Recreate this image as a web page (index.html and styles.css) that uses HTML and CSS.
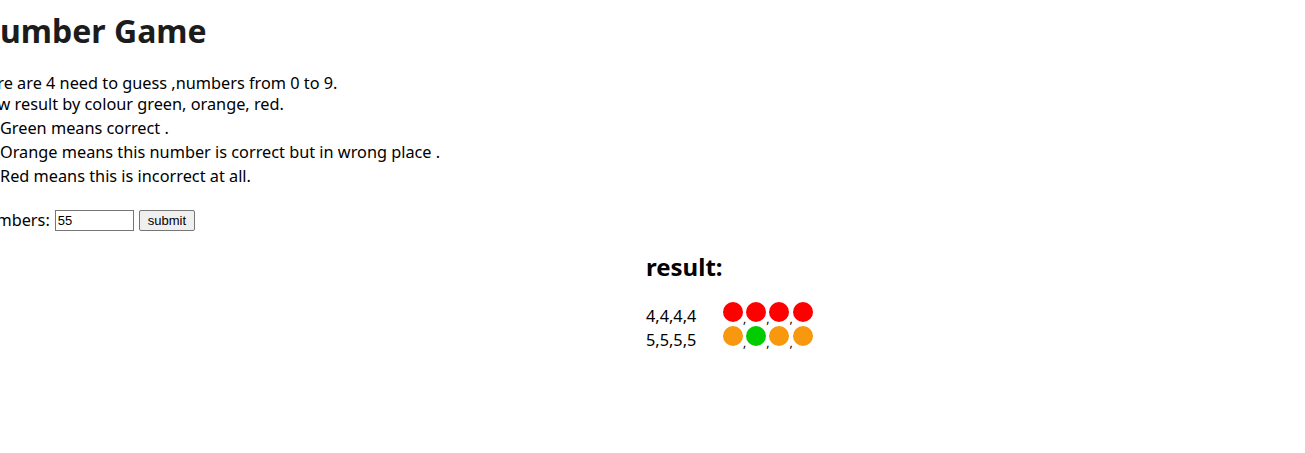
FILE: index.html
```html
<!DOCTYPE html>
<html>
<head>
<meta charset="utf-8">
<link rel="stylesheet" href="styles.css">
</head>
<body>
<div class="page">
  <div class="intro">
    <h1 class="title">Number Game</h1>
    <p class="desc">There are 4 need to guess ,numbers from 0 to 9.<br>Show result by colour green, orange, red.</p>
    <ul class="rules">
      <li>Green means correct .</li>
      <li>Orange means this number is correct but in wrong place .</li>
      <li>Red means this is incorrect at all.</li>
    </ul>
    <form class="guess">
      <label class="label">Numbers:</label>
      <input class="field" type="text" value="55">
      <button class="btn" type="button">submit</button>
    </form>
  </div>
  <div class="result">
    <h2 class="result-title">result:</h2>
    <div class="rows">
      <div class="row">
        <span class="guess-text">4,4,4,4</span>
        <span class="dots"><span class="dot red"></span>,<span class="dot red"></span>,<span class="dot red"></span>,<span class="dot red"></span></span>
      </div>
      <div class="row">
        <span class="guess-text">5,5,5,5</span>
        <span class="dots"><span class="dot orange"></span>,<span class="dot green"></span>,<span class="dot orange"></span>,<span class="dot orange"></span></span>
      </div>
    </div>
  </div>
</div>
</body>
</html>
```

FILE: styles.css
```css
html, body {
  margin: 0;
  padding: 0;
  background: #fff;
}
body {
  font-family: "Noto Sans", "Open Sans", sans-serif;
  font-size: 16.3px;
  color: #000;
  overflow: hidden;
}
.page {
  display: flex;
  flex-direction: column;
}
.intro {
  margin-left: -26px;
}
.title {
  font-size: 32px;
  font-weight: bold;
  color: #1c1c1c;
  margin: 7px 0 0 0;
  line-height: 48px;
}
.desc {
  margin: 18px 0 0 -5px;
  line-height: 21px;
}
.rules {
  list-style: none;
  margin: 1px 0 0 0;
  padding: 0 0 0 26px;
}
.rules li {
  line-height: 24px;
}
.guess {
  display: flex;
  align-items: center;
  margin: 21px 0 0 0;
  gap: 5px;
}
.field {
  width: 73px;
  height: 15px;
  font: 13px "Liberation Sans", Arial, sans-serif;
  border: 1px solid #767676;
  padding: 2px;
  margin: 0;
}
.btn {
  font: 13px "Liberation Sans", Arial, sans-serif;
  background: #efefef;
  border: 1px solid #767676;
  border-radius: 2px;
  padding: 1px 8px;
  height: 21px;
  margin-left: 0;
}
.result {
  margin-left: 646px;
  margin-top: 20px;
}
.result-title {
  font-size: 24px;
  font-weight: bold;
  margin: 0;
  line-height: 32px;
}
.rows {
  margin-top: 21px;
}
.row {
  display: flex;
  align-items: flex-end;
  height: 24px;
}
.guess-text {
  width: 77px;
  line-height: 24px;
}
.dots {
  display: flex;
  align-items: flex-end;
  line-height: 10px;
  font-size: 12px;
  margin-bottom: 4px;
}
.dot {
  display: inline-block;
  width: 20px;
  height: 20px;
  border-radius: 50%;
  margin-bottom: 2px;
}
.red { background: #ff0000; }
.orange { background: #f7980f; }
.green { background: #00cc00; }
```
